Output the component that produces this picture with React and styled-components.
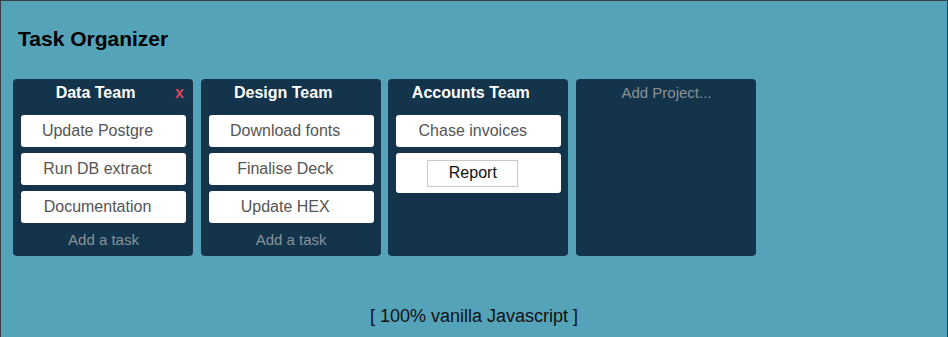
import React from 'react';
import styled, { createGlobalStyle } from 'styled-components';

const GlobalStyle = createGlobalStyle`
  html, body {
    margin: 0;
    padding: 0;
    background: #55a3b9;
  }
  * {
    box-sizing: border-box;
  }
`;

const Page = styled.div`
  height: 337px;
  border: 1px solid #3a3e42;
  border-bottom: none;
  background: #55a3b9;
  font-family: "Liberation Sans", Arial, sans-serif;
  padding: 0 12px;
`;

const Title = styled.h1`
  margin: 0;
  padding: 26px 0 0 5px;
  font-size: 21px;
  line-height: 24px;
  font-weight: bold;
  color: #000;
`;

const Board = styled.div`
  display: flex;
  gap: 7.67px;
  margin-top: 28px;
`;

const Column = styled.div`
  width: 180px;
  height: 177px;
  background: #13344a;
  border-radius: 4px;
  display: flex;
  flex-direction: column;
  padding: 4px 7px 0 8px;
`;

const ColumnHeader = styled.div`
  position: relative;
  height: 32px;
  padding-right: ${props => (props.$plain ? '0' : '16px')};
  text-align: center;
  font-size: ${props => (props.$plain ? '15px' : '16px')};
  font-weight: ${props => (props.$plain ? 'normal' : 'bold')};
  line-height: 20px;
  color: ${props => (props.$plain ? '#8a9298' : '#fff')};
`;

const Close = styled.span`
  position: absolute;
  right: 2px;
  top: 0;
  color: #d9445f;
  font-size: 16px;
  font-weight: bold;
  line-height: 20px;
`;

const TaskList = styled.div`
  display: flex;
  flex-direction: column;
  gap: 6px;
`;

const Task = styled.div`
  height: ${props => (props.$editing ? '40px' : '32px')};
  background: #fff;
  border-radius: 3px;
  padding-right: 12px;
  display: flex;
  align-items: center;
  justify-content: center;
  font-size: 16px;
  color: #555;
`;

const TaskInput = styled.div`
  width: 91px;
  height: 27px;
  border: 1px solid #c8c8c8;
  display: flex;
  align-items: center;
  justify-content: center;
  font-size: 16px;
  color: #111;
`;

const AddTask = styled.div`
  margin-top: 8px;
  text-align: center;
  font-size: 15px;
  line-height: 18px;
  color: #8a9298;
`;

const Footer = styled.div`
  margin-top: 49px;
  text-align: center;
  font-size: 18px;
  line-height: 22px;
  color: #111;
`;

const columns = [
  { name: 'Data Team', tasks: ['Update Postgre', 'Run DB extract', 'Documentation'], close: true, add: true },
  { name: 'Design Team', tasks: ['Download fonts', 'Finalise Deck', 'Update HEX'], add: true },
  { name: 'Accounts Team', tasks: ['Chase invoices'], editing: 'Report' },
];

export default function App() {
  return (
    <>
      <GlobalStyle />
      <Page>
        <Title>Task Organizer</Title>
        <Board>
          {columns.map(col => (
            <Column key={col.name}>
              <ColumnHeader>
                {col.name}
                {col.close && <Close>x</Close>}
              </ColumnHeader>
              <TaskList>
                {col.tasks.map(t => (
                  <Task key={t}>{t}</Task>
                ))}
                {col.editing && (
                  <Task $editing>
                    <TaskInput>{col.editing}</TaskInput>
                  </Task>
                )}
              </TaskList>
              {col.add && <AddTask>Add a task</AddTask>}
            </Column>
          ))}
          <Column>
            <ColumnHeader $plain>Add Project...</ColumnHeader>
          </Column>
        </Board>
        <Footer>[ 100% vanilla Javascript ]</Footer>
      </Page>
    </>
  );
}
